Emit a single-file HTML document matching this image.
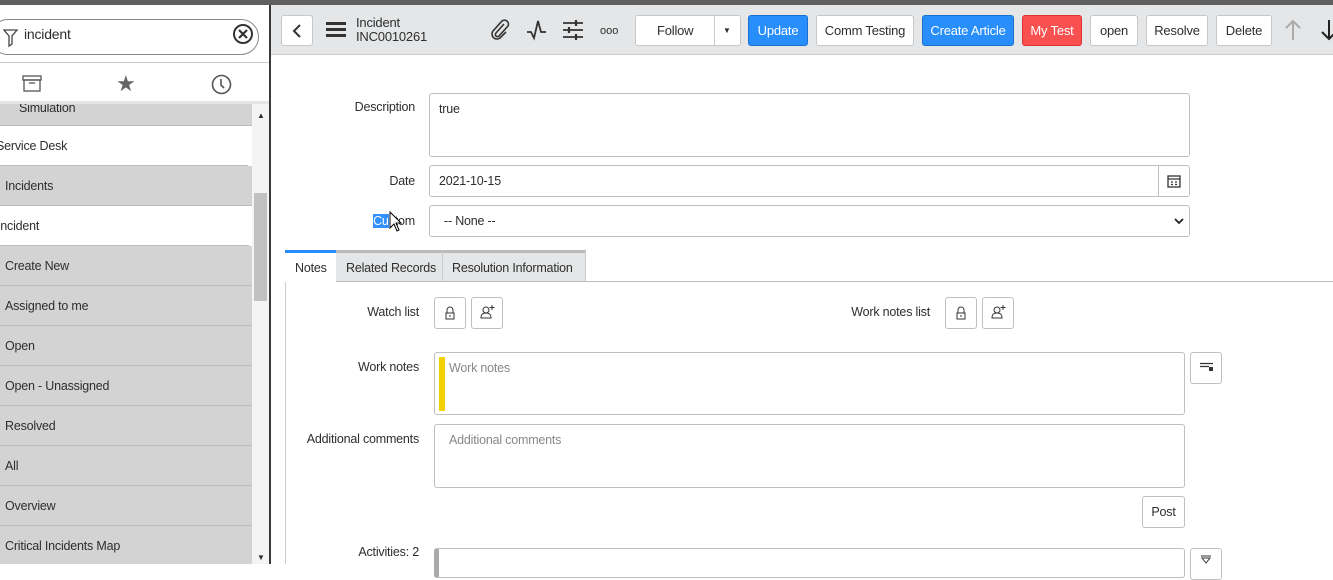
<!DOCTYPE html>
<html><head><meta charset="utf-8"><style>
*{box-sizing:border-box;margin:0;padding:0}
body{width:1333px;height:564px;overflow:hidden;background:#fff;font-family:"Liberation Sans",sans-serif;font-size:12.5px;color:#2e2e2e;position:relative;letter-spacing:-0.2px}
.a{position:absolute}
.topbar{left:0;top:0;width:1333px;height:5px;background:#606060}
.nav{left:0;top:5px;width:269px;height:559px;background:#fff;overflow:hidden}
.divider{left:269px;top:5px;width:2px;height:559px;background:#3a3a3a}
.search{left:-10px;top:14px;width:269px;height:36px;border:1px solid #888;border-radius:18px}
.item{position:absolute;left:0;width:252px;height:40px;line-height:40px;border-bottom:1px solid #bcbcbc}
.g{background:#d3d3d3;padding-left:5px}
.w{background:#fff}
.hdr{left:271px;top:5px;width:1062px;height:50px;background:#e4e6e7;border-bottom:1px solid #ccc}
.btn{position:absolute;top:10px;height:31px;border:1px solid #c8c8c8;border-radius:3px;background:#fff;line-height:29px;text-align:center;font-size:13px}
.lbl{position:absolute;text-align:right;font-size:12.5px}
.box{position:absolute;border:1px solid #c0c0c0;border-radius:3px;background:#fff}
.ib{position:absolute;width:32px;height:32px;border:1px solid #c0c0c0;border-radius:3px;background:#fff}
</style></head><body>
<div class="a topbar"></div>
<div class="a nav">
  <div class="a search"></div>
  <svg class="a" style="left:3px;top:23px" width="16" height="20" viewBox="0 0 16 20"><path d="M1 2h13l-5 6v8l-3 2V8z" fill="none" stroke="#444" stroke-width="1.3"/></svg>
  <div class="a" style="left:24px;top:21px;font-size:14px">incident</div>
  <svg class="a" style="left:232px;top:18px" width="22" height="22" viewBox="0 0 22 22"><circle cx="11" cy="11" r="9" fill="none" stroke="#333" stroke-width="2"/><path d="M7 7l8 8M15 7l-8 8" stroke="#333" stroke-width="2.2"/></svg>
  <div class="a" style="left:0;top:57px;width:269px;height:1px;background:#ccc"></div>
  <svg class="a" style="left:22px;top:70px" width="20" height="18" viewBox="0 0 20 18"><rect x="1" y="1" width="18" height="4" fill="none" stroke="#555" stroke-width="1.3"/><rect x="2" y="5" width="16" height="11" fill="none" stroke="#555" stroke-width="1.3"/><path d="M7 8h6" stroke="#555" stroke-width="1.3"/></svg>
  <div class="a" style="left:116px;top:66px;font-size:22px;color:#666">★</div>
  <svg class="a" style="left:211px;top:69px" width="21" height="21" viewBox="0 0 21 21"><circle cx="10.5" cy="10.5" r="9" fill="none" stroke="#555" stroke-width="1.6"/><path d="M10 5v6l3 3" fill="none" stroke="#555" stroke-width="1.6"/></svg>
  <div class="a" style="left:0;top:96px;width:269px;height:3px;background:#e4e4e4"></div>
  <div class="item g" style="top:99px;height:22px;line-height:8px;padding-left:19px;overflow:hidden">Simulation</div>
  <div class="item w" style="top:121px;left:-4px">Service Desk</div>
  <div class="item g" style="top:161px">Incidents</div>
  <div class="item w" style="top:201px;left:-3px">Incident</div>
  <div class="item g" style="top:241px">Create New</div>
  <div class="item g" style="top:281px">Assigned to me</div>
  <div class="item g" style="top:321px">Open</div>
  <div class="item g" style="top:361px">Open - Unassigned</div>
  <div class="item g" style="top:401px">Resolved</div>
  <div class="item g" style="top:441px">All</div>
  <div class="item g" style="top:481px">Overview</div>
  <div class="item g" style="top:521px">Critical Incidents Map</div>
  <div class="a" style="left:252px;top:99px;width:17px;height:460px;background:#f4f4f4"></div>
  <div class="a" style="left:254px;top:188px;width:13px;height:108px;background:#c1c1c1"></div>
  <div class="a" style="left:257px;top:106px;font-size:8px">▲</div>
  <div class="a" style="left:257px;top:548px;font-size:8px">▼</div>
</div>
<div class="a divider"></div>
<div class="a hdr">
  <div class="btn" style="left:10px;width:32px"><svg style="margin-top:8px" width="10" height="14" viewBox="0 0 10 14"><path d="M8 1L2 7l6 6" fill="none" stroke="#333" stroke-width="2"/></svg></div>
  <div class="a" style="left:55px;top:17px;width:20px;height:3px;background:#333;box-shadow:0 6px 0 #333,0 12px 0 #333"></div>
  <div class="a" style="left:85px;top:11px;font-size:13px;line-height:14px">Incident<br>INC0010261</div>
  <svg class="a" style="left:218px;top:14px" width="22" height="22" viewBox="0 0 22 22"><path d="M15 5l-8 9a2 2 0 0 0 3 3l9-10a4 4 0 0 0-6-5L4 12a5 5 0 0 0 7 7l6-6" fill="none" stroke="#333" stroke-width="1.6"/></svg>
  <svg class="a" style="left:255px;top:14px" width="22" height="22" viewBox="0 0 22 22"><path d="M1 13h4l3 6 4-17 3 11h5" fill="none" stroke="#333" stroke-width="1.8"/></svg>
  <svg class="a" style="left:291px;top:14px" width="22" height="22" viewBox="0 0 22 22"><path d="M1 4h20M1 11h20M1 18h20" stroke="#333" stroke-width="1.8"/><path d="M14 1v6M7 8v6M14 15v6" stroke="#333" stroke-width="2.2"/></svg>
  <div class="a" style="left:329px;top:20px;font-size:11px;letter-spacing:0">ooo</div>
  <div class="btn" style="left:364px;width:106px;text-align:left;padding-left:21px">Follow<span style="position:absolute;left:78px;top:0;width:1px;height:29px;background:#ccc"></span><span style="position:absolute;left:87px;font-size:8px">▼</span></div>
  <div class="btn" style="left:477px;width:60px;background:#278efc;border-color:#1a6fd0;color:#fff">Update</div>
  <div class="btn" style="left:545px;width:98px">Comm Testing</div>
  <div class="btn" style="left:651px;width:92px;background:#278efc;border-color:#1a6fd0;color:#fff">Create Article</div>
  <div class="btn" style="left:751px;width:60px;background:#f95050;border-color:#d33;color:#fff">My Test</div>
  <div class="btn" style="left:819px;width:48px">open</div>
  <div class="btn" style="left:875px;width:62px">Resolve</div>
  <div class="btn" style="left:945px;width:56px">Delete</div>
  <svg class="a" style="left:1014px;top:14px" width="16" height="22" viewBox="0 0 16 22"><path d="M8 21V2M1 9l7-7 7 7" fill="none" stroke="#aaa" stroke-width="2"/></svg>
  <svg class="a" style="left:1050px;top:14px" width="16" height="22" viewBox="0 0 16 22"><path d="M8 1v19M1 13l7 7 7-7" fill="none" stroke="#222" stroke-width="2"/></svg>
</div>

<div class="lbl" style="left:300px;width:115px;top:100px">Description</div>
<div class="box" style="left:429px;top:93px;width:761px;height:64px;padding:8px 9px">true</div>
<div class="lbl" style="left:300px;width:115px;top:174px">Date</div>
<div class="box" style="left:429px;top:165px;width:761px;height:32px;padding:8px 9px">2021-10-15</div>
<div class="a" style="left:1158px;top:166px;width:1px;height:30px;background:#c0c0c0"></div>
<svg class="a" style="left:1167px;top:174px" width="14" height="14" viewBox="0 0 14 14"><rect x="1" y="2" width="12" height="11" fill="none" stroke="#333" stroke-width="1.3"/><path d="M1 5h12M4 8h2M8 8h2M4 10.5h2M8 10.5h2" stroke="#333" stroke-width="1.3"/></svg>
<div class="lbl" style="left:300px;width:115px;top:214px"><span style="background:#3390ff;color:#fff">Cu</span>stom</div>
<svg class="a" style="left:389px;top:211px" width="14" height="22" viewBox="0 0 14 22"><path d="M1 1v16l4-4 3 7 2-1-3-7h5z" fill="#fff" stroke="#000"/></svg>
<div class="box" style="left:429px;top:205px;width:761px;height:32px;padding:8px 14px">-- None --</div>
<svg class="a" style="left:1174px;top:217px" width="10" height="8" viewBox="0 0 10 8"><path d="M1 2l4 4 4-4" fill="none" stroke="#222" stroke-width="1.8"/></svg>

<div class="a" style="left:285px;top:250px;width:1048px;height:314px;border-left:1px solid #ccc"></div>
<div class="a" style="left:285px;top:281px;width:1048px;height:1px;background:#bbb"></div>
<div class="a" style="left:285px;top:250px;width:51px;height:32px;border-top:3px solid #278efc;background:#fff;padding:8px 0 0 10px">Notes</div>
<div class="a" style="left:336px;top:250px;width:107px;height:31px;border-top:3px solid #bbb;background:#e4e6e7;border-right:1px solid #ccc;padding:8px 0 0 10px">Related Records</div>
<div class="a" style="left:443px;top:250px;width:143px;height:31px;border-top:3px solid #bbb;background:#e4e6e7;border-right:1px solid #ccc;padding:8px 0 0 9px">Resolution Information</div>

<div class="lbl" style="left:300px;width:119px;top:305px">Watch list</div>
<div class="ib" style="left:434px;top:297px"></div><div class="ib" style="left:471px;top:297px"></div>
<div class="lbl" style="left:800px;width:130px;top:305px">Work notes list</div>
<div class="ib" style="left:945px;top:297px"></div><div class="ib" style="left:982px;top:297px"></div>
<svg class="a" style="left:444px;top:305px" width="12" height="16" viewBox="0 0 12 16"><path d="M3 8V5a3 3 0 0 1 6 0v3" fill="none" stroke="#333"/><rect x="2" y="8" width="8" height="6" fill="none" stroke="#333"/><path d="M6 10v2" stroke="#333"/></svg>
<svg class="a" style="left:955px;top:305px" width="12" height="16" viewBox="0 0 12 16"><path d="M3 8V5a3 3 0 0 1 6 0v3" fill="none" stroke="#333"/><rect x="2" y="8" width="8" height="6" fill="none" stroke="#333"/><path d="M6 10v2" stroke="#333"/></svg>
<svg class="a" style="left:480px;top:304px" width="16" height="16" viewBox="0 0 16 16"><circle cx="6" cy="6" r="3" fill="none" stroke="#333"/><path d="M1 14c0-4 2-5 5-5s5 1 5 5z" fill="none" stroke="#333"/><path d="M12 1v5M9.5 3.5h5" stroke="#333"/></svg>
<svg class="a" style="left:991px;top:304px" width="16" height="16" viewBox="0 0 16 16"><circle cx="6" cy="6" r="3" fill="none" stroke="#333"/><path d="M1 14c0-4 2-5 5-5s5 1 5 5z" fill="none" stroke="#333"/><path d="M12 1v5M9.5 3.5h5" stroke="#333"/></svg>

<div class="lbl" style="left:300px;width:119px;top:360px">Work notes</div>
<div class="box" style="left:434px;top:352px;width:751px;height:63px;padding:8px 14px;color:#888">Work notes</div>
<div class="a" style="left:439px;top:357px;width:6px;height:54px;background:#f5d000"></div>
<div class="ib" style="left:1190px;top:352px;height:32px"></div>
<svg class="a" style="left:1199px;top:362px" width="15" height="10" viewBox="0 0 15 10"><path d="M1 1.5h13M1 4.5h9" stroke="#333" stroke-width="1.2"/><rect x="10" y="5" width="4" height="4" fill="#333"/></svg>

<div class="lbl" style="left:290px;width:129px;top:432px">Additional comments</div>
<div class="box" style="left:434px;top:424px;width:751px;height:64px;padding:8px 14px;color:#888">Additional comments</div>
<div class="ib" style="left:1142px;top:496px;width:43px;height:32px;line-height:30px;text-align:center">Post</div>
<div class="lbl" style="left:300px;width:119px;top:545px">Activities: 2</div>
<div class="box" style="left:434px;top:548px;width:751px;height:30px;border-left:5px solid #aaa"></div>
<div class="ib" style="left:1190px;top:548px"></div>
<svg class="a" style="left:1200px;top:555px" width="12" height="10" viewBox="0 0 12 10"><path d="M1 1h10M2 3l4 5 4-5z" fill="none" stroke="#333"/></svg>
</body></html>
